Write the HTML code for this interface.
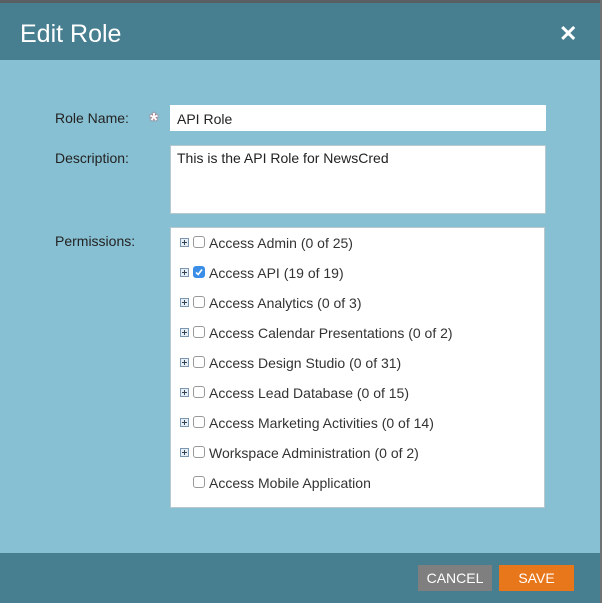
<!DOCTYPE html><html><head><style>
body{margin:0;width:602px;height:603px;overflow:hidden;background:#88c0d3;font-family:"Liberation Sans",sans-serif;position:relative}
.abs{position:absolute}
.lbl{font-size:14px;color:#222}
.box{background:#fff;border:1px solid #b8c8cf;box-sizing:border-box}
.row{position:absolute;left:180px;font-size:14px;color:#333;height:16px;line-height:16px}
.pl{position:absolute;left:0;top:3px;width:9px;height:9px;border:1px solid #7a96b0;box-sizing:border-box;background:#e8eef5}
.pl:before{content:"";position:absolute;left:1px;top:3px;width:5px;height:1px;background:#345}
.pl:after{content:"";position:absolute;left:3px;top:1px;width:1px;height:5px;background:#345}
.cb{position:absolute;left:13px;top:1px;width:12px;height:12px;border:1px solid #999;border-radius:3px;box-sizing:border-box;background:#fff}
.cb.on{background:#3b8ee8;border-color:#3b8ee8}
.t{position:absolute;left:29px;top:0;white-space:nowrap}
</style></head><body>
<div class="abs" style="left:0;top:0;width:602px;height:3px;background:#5a5f63"></div>
<div class="abs" style="left:0;top:3px;width:602px;height:57px;background:#477f91"></div>
<div class="abs" style="left:20px;top:20px;color:#fff;font-size:25px">Edit Role</div>
<div class="abs" style="left:559px;top:21px;color:#fff;font-size:22px;font-weight:bold">✕</div>
<div class="abs" style="left:600px;top:0;width:2px;height:603px;background:#6d7275"></div>
<div class="abs lbl" style="left:55px;top:110px">Role Name:</div>
<div class="abs" style="left:150px;top:110px;color:#fff;font-size:20px;text-shadow:0 0 2px #c33;font-weight:bold">*</div>
<div class="abs box" style="left:170px;top:105px;width:376px;height:26px;border:none"></div>
<div class="abs" style="left:177px;top:111px;font-size:14px;color:#222">API Role</div>
<div class="abs lbl" style="left:55px;top:150px">Description:</div>
<div class="abs box" style="left:170px;top:145px;width:376px;height:69px"></div>
<div class="abs" style="left:177px;top:150px;font-size:14px;color:#222">This is the API Role for NewsCred</div>
<div class="abs lbl" style="left:55px;top:233px">Permissions:</div>
<div class="abs box" style="left:170px;top:227px;width:375px;height:281px"></div>
<div class="row" style="top:235px"><div class="pl"></div><div class="cb"></div><div class="t">Access Admin (0 of 25)</div></div>
<div class="row" style="top:265px"><div class="pl"></div><div class="cb on"><svg width="10" height="10" style="position:absolute;left:0;top:0"><path d="M2 5.5L4.2 7.5L8 2.5" stroke="#fff" stroke-width="1.6" fill="none"/></svg></div><div class="t">Access API (19 of 19)</div></div>
<div class="row" style="top:295px"><div class="pl"></div><div class="cb"></div><div class="t">Access Analytics (0 of 3)</div></div>
<div class="row" style="top:325px"><div class="pl"></div><div class="cb"></div><div class="t">Access Calendar Presentations (0 of 2)</div></div>
<div class="row" style="top:355px"><div class="pl"></div><div class="cb"></div><div class="t">Access Design Studio (0 of 31)</div></div>
<div class="row" style="top:385px"><div class="pl"></div><div class="cb"></div><div class="t">Access Lead Database (0 of 15)</div></div>
<div class="row" style="top:415px"><div class="pl"></div><div class="cb"></div><div class="t">Access Marketing Activities (0 of 14)</div></div>
<div class="row" style="top:445px"><div class="pl"></div><div class="cb"></div><div class="t">Workspace Administration (0 of 2)</div></div>
<div class="row" style="top:475px"><div class="cb"></div><div class="t">Access Mobile Application</div></div>
<div class="abs" style="left:0;top:553px;width:600px;height:50px;background:#477f91"></div>
<div class="abs" style="left:418px;top:565px;width:74px;height:26px;background:#7f7f7f;color:#fff;font-size:14px;text-align:center;line-height:26px">CANCEL</div>
<div class="abs" style="left:499px;top:565px;width:75px;height:26px;background:#e8761a;color:#fff;font-size:14px;text-align:center;line-height:26px">SAVE</div>
</body></html>
